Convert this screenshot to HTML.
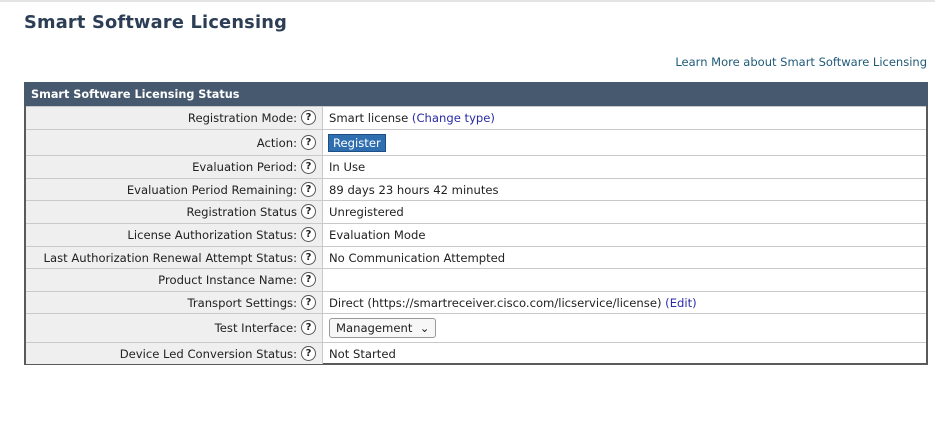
<!DOCTYPE html>
<html><head><meta charset="utf-8"><style>
body{margin:0;width:935px;height:445px;background:#fff;font-family:"DejaVu Sans","Liberation Sans",sans-serif;position:relative;overflow:hidden}
.topline{position:absolute;left:0;top:0;width:935px;height:2px;background:#e4e4e4}
h1{position:absolute;left:24px;top:12px;margin:0;font-size:17.8px;font-weight:bold;color:#2c3e55;letter-spacing:0.2px}
.learn{position:absolute;right:8px;top:55px;font-size:11.5px;color:#1f5a78}
.tbl{position:absolute;left:24px;top:82px;width:900px;height:281px;border:2px solid #5a5a5a;border-top:none}
.hdr{position:absolute;left:-2px;top:0;width:904px;height:24px;background:#46596f;color:#fff;font-weight:bold;font-size:11.25px;line-height:25px;padding-left:7px;box-sizing:border-box}
.row{position:absolute;left:0;width:900px;border-top:1px solid #c9c9c9;font-size:11.6px;color:#222}
.lab{position:absolute;left:0;top:0;bottom:0;width:297px;background:#efefef;border-right:1px solid #c9c9c9;text-align:right;padding-right:25px;box-sizing:border-box;display:flex;align-items:center;justify-content:flex-end}
.q{position:absolute;right:6px;top:50%;margin-top:-8px;width:13px;height:13px;border:1px solid #555;border-radius:50%;font-size:10px;font-weight:bold;line-height:13px;text-align:center;color:#222;background:#fff}
.val{position:absolute;left:303px;top:0;bottom:0;display:flex;align-items:center}
a{color:#2a2aa8;text-decoration:none}
.btn{background:#2f6fb0;color:#fff;padding:1px 4px;border:1px solid #1d4f86;font-size:11.6px;margin-left:-1px}
.sel{border:1px solid #999;border-radius:3px;padding:2px 6px;background:#f7f7f7;font-size:11.6px}
</style></head><body>
<div class="topline"></div>
<h1>Smart Software Licensing</h1>
<div class="learn">Learn More about Smart Software Licensing</div>
<div class="tbl">
<div class="hdr">Smart Software Licensing Status</div>
<div class="row" style="top:24px;height:22px"><div class="lab">Registration Mode:<span class="q">?</span></div><div class="val">Smart license&nbsp;<a>(Change type)</a></div></div>
<div class="row" style="top:47px;height:25px"><div class="lab">Action:<span class="q">?</span></div><div class="val"><span class="btn">Register</span></div></div>
<div class="row" style="top:73px;height:22px"><div class="lab">Evaluation Period:<span class="q">?</span></div><div class="val">In Use</div></div>
<div class="row" style="top:96px;height:21px"><div class="lab">Evaluation Period Remaining:<span class="q">?</span></div><div class="val">89 days 23 hours 42 minutes</div></div>
<div class="row" style="top:118px;height:22px"><div class="lab">Registration Status<span class="q">?</span></div><div class="val">Unregistered</div></div>
<div class="row" style="top:141px;height:22px"><div class="lab">License Authorization Status:<span class="q">?</span></div><div class="val">Evaluation Mode</div></div>
<div class="row" style="top:164px;height:21px"><div class="lab">Last Authorization Renewal Attempt Status:<span class="q">?</span></div><div class="val">No Communication Attempted</div></div>
<div class="row" style="top:186px;height:22px"><div class="lab">Product Instance Name:<span class="q">?</span></div><div class="val"></div></div>
<div class="row" style="top:209px;height:21px"><div class="lab">Transport Settings:<span class="q">?</span></div><div class="val">Direct (https://smartreceiver.cisco.com/licservice/license)&nbsp;<a>(Edit)</a></div></div>
<div class="row" style="top:231px;height:28px"><div class="lab">Test Interface:<span class="q">?</span></div><div class="val"><span class="sel">Management &nbsp;&#8964;</span></div></div>
<div class="row" style="top:260px;height:21px"><div class="lab">Device Led Conversion Status:<span class="q">?</span></div><div class="val">Not Started</div></div>
</div>
</body></html>
